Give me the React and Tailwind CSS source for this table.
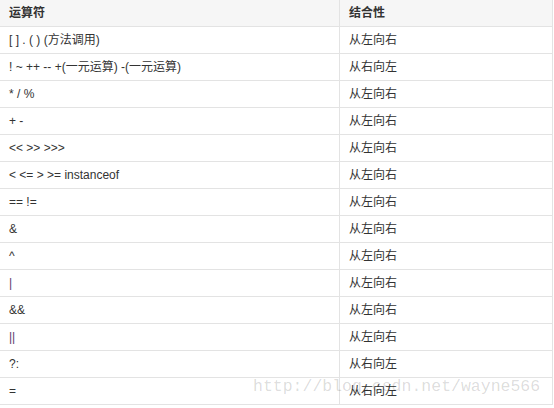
import React from 'react';

const rows = [
  ['[ ] . ( ) (方法调用)', '从左向右'],
  ['! ~ ++ -- +(一元运算) -(一元运算)', '从右向左'],
  ['* / %', '从左向右'],
  ['+ -', '从左向右'],
  ['<< >> >>>', '从左向右'],
  ['< <= > >= instanceof', '从左向右'],
  ['== !=', '从左向右'],
  ['&', '从左向右'],
  ['^', '从左向右'],
  ['|', '从左向右'],
  ['&&', '从左向右'],
  ['||', '从左向右'],
  ['?:', '从右向左'],
  ['=', '从右向左'],
];

const App = () => {
  return (
    <div className="relative w-[554px] h-[408px] bg-white text-[12px] text-[#333] font-['Liberation_Sans','Noto_Sans_CJK_SC',sans-serif]">
      <div className="w-[553px] border-r border-[#e3e3e3]">
        <div className="flex h-[27px] border-b border-[#e3e3e3] bg-[#f6f6f6] font-bold">
          <div className="w-[340px] flex items-center pl-[9px] border-r border-[#e3e3e3]">运算符</div>
          <div className="flex-1 flex items-center pl-[9px]">结合性</div>
        </div>
        {rows.map(([op, assoc], i) => (
          <div key={i} className="flex h-[27px] border-b border-[#e3e3e3]">
            <div
              className={
                'w-[340px] flex items-center pl-[9px] border-r border-[#e3e3e3] ' +
                (op === '|' || op === '||' ? 'text-[#5b3a6e]' : '')
              }
            >
              {op}
            </div>
            <div className="flex-1 flex items-center pl-[9px]">{assoc}</div>
          </div>
        ))}
      </div>

      {/* watermark */}
      <div className="absolute left-[253px] top-[379px] text-[16.5px] leading-none text-black/15 font-['Liberation_Mono',monospace] pointer-events-none whitespace-nowrap">
        http://blog.csdn.net/wayne566
      </div>
    </div>
  );
};

export default App;
